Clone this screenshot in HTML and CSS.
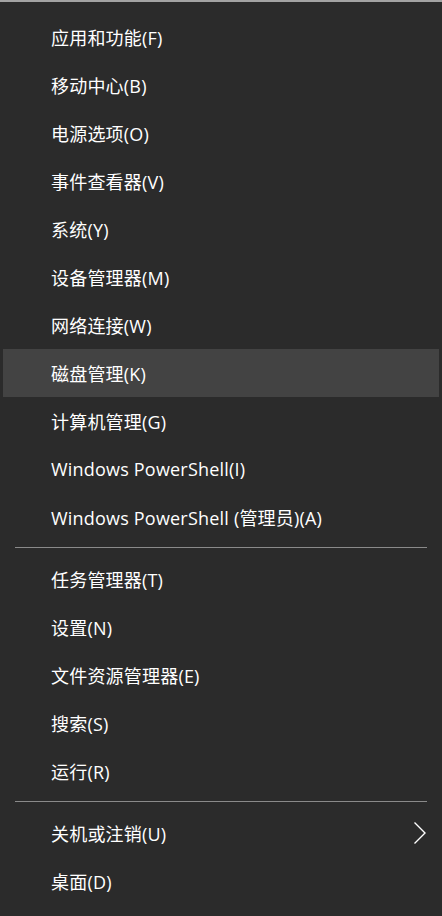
FILE: index.html
```html
<!DOCTYPE html>
<html lang="zh-CN">
<head>
<meta charset="utf-8">
<title>Win+X</title>
<link rel="stylesheet" href="styles.css">
</head>
<body>
<div class="menu">
  <div class="group">
    <div class="item">应用和功能(F)</div>
    <div class="item">移动中心(B)</div>
    <div class="item">电源选项(O)</div>
    <div class="item">事件查看器(V)</div>
    <div class="item">系统(Y)</div>
    <div class="item">设备管理器(M)</div>
    <div class="item">网络连接(W)</div>
    <div class="item active">磁盘管理(K)</div>
    <div class="item">计算机管理(G)</div>
    <div class="item">Windows PowerShell(I)</div>
    <div class="item">Windows PowerShell (管理员)(A)</div>
  </div>
  <div class="sep"></div>
  <div class="group">
    <div class="item">任务管理器(T)</div>
    <div class="item">设置(N)</div>
    <div class="item">文件资源管理器(E)</div>
    <div class="item">搜索(S)</div>
    <div class="item">运行(R)</div>
  </div>
  <div class="sep sep2"></div>
  <div class="group">
    <div class="item sub"><span>关机或注销(U)</span><svg class="chev" width="14" height="24" viewBox="0 0 14 24"><polyline points="1.5,1.5 12,12 1.5,22.5" fill="none" stroke="#ffffff" stroke-width="1.4"/></svg></div>
    <div class="item">桌面(D)</div>
  </div>
</div>
</body>
</html>
```
FILE: styles.css
```css
html, body {
  margin: 0;
  padding: 0;
  background: #2b2b2b;
}
body {
  width: 442px;
  height: 916px;
  overflow: hidden;
}
.menu {
  box-sizing: border-box;
  height: 916px;
  border-top: 2px solid #a3a3a3;
  padding-top: 11px;
  font-family: "Open Sans", "Noto Sans CJK SC", sans-serif;
  font-size: 18px;
  letter-spacing: 0.2px;
  color: #ffffff;
}
.group {
  display: flex;
  flex-direction: column;
}
.item {
  height: 48px;
  margin: 0 3px 0 3px;
  padding: 0 12px 0 48px;
  display: flex;
  align-items: center;
  justify-content: space-between;
  white-space: nowrap;
}
.item.active {
  background: #434343;
}
.sep {
  height: 1px;
  background: #8a8a8a;
  margin: 6px 15px 7px 15px;
}
.sep2 {
  margin-bottom: 7px;
}
.chev {
  display: block;
}
```
